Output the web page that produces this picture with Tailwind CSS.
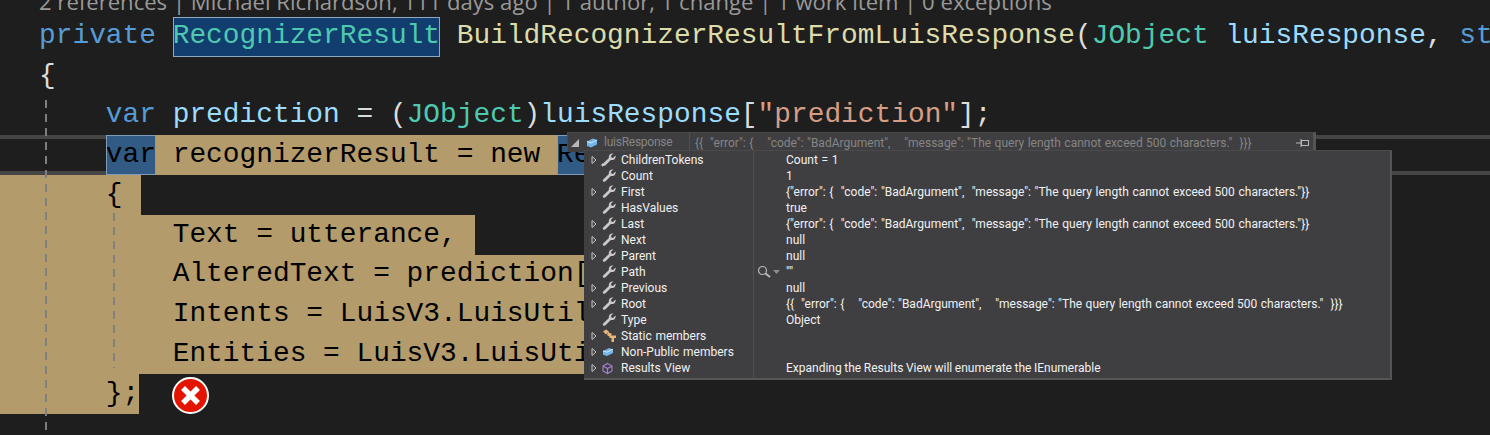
<!DOCTYPE html>
<html lang="en">
  <head>
    <meta charset="UTF-8" />
    <title>Debugger data tip</title>
    <script src="https://cdn.jsdelivr.net/npm/@tailwindcss/browser@4"></script>
  </head>
  <body class="bg-[#1e1e1e]">
    <svg class="hidden">
      <symbol id="wrench" viewBox="0 0 16 14">
        <path d="M15.6 2.6 L13 5 L11.4 4.4 L11 2.8 L13.4 0.5 C10.4 -0.1 8.2 2.2 8.9 5 L3.4 10.2 C2.2 11.4 3 13.6 5.2 12.6 L10.9 7 C13.6 7.6 16.2 5.4 15.6 2.6Z" fill="#c8c8c8" />
      </symbol>
      <symbol id="arrow" viewBox="0 0 6 8">
        <path d="M1 0.5 L5 4 L1 7.5Z" fill="#3f3f41" stroke="#c8c8c8" />
      </symbol>
    </svg>
    <div class="relative w-[1490px] h-[435px] overflow-hidden bg-[#1e1e1e]">
      <!-- code lens -->
      <div class="h-[16px] pl-[39px] flex items-end overflow-hidden">
        <div class="shrink-0 whitespace-nowrap font-['Open_Sans',sans-serif] text-[22.1px] leading-[30px] text-[#999999]">2 references | Michael Richardson, 111 days ago | 1 author, 1 change | 1 work item | 0 exceptions</div>
      </div>

      <!-- code -->
      <div class="font-['Liberation_Mono',monospace] text-[27.85px] text-[#dcdcdc] [&>div]:whitespace-pre">
        <div class="h-[39.8px] leading-[39.8px] pl-[39px]"><span class="text-[#569cd6]">private </span><span class="inline-block h-[39.8px] leading-[38px] text-[#4ec9b0] bg-[#113d6f] outline outline-1 -outline-offset-1 outline-[#8fa7c0]">RecognizerResult</span> <span class="text-[#dcdcaa]">BuildRecognizerResultFromLuisResponse</span>(<span class="text-[#4ec9b0]">JObject</span> <span class="text-[#9cdcfe]">luisResponse</span>, <span class="text-[#569cd6]">string</span> utterance)</div>
        <div class="h-[39.8px] leading-[39.8px] pl-[39px]">{</div>
        <div class="h-[39.8px] leading-[38px] pl-[39px]">    <span class="text-[#569cd6]">var</span> <span class="text-[#9cdcfe]">prediction</span> = (<span class="text-[#4ec9b0]">JObject</span>)<span class="text-[#9cdcfe]">luisResponse</span>[<span class="text-[#d69d85]">"prediction"</span>];</div>
        <div class="h-[39.8px] pl-[39px] border-y-[4px] border-[#464646] box-border flex text-black"><span class="text-transparent">    </span><span class="-my-[4px] h-[39.8px] leading-[39.8px] bg-[#315b85] outline outline-1 -outline-offset-1 outline-[#7f9cb8]">var</span><span class="-my-[4px] h-[39.8px] leading-[39.8px] bg-[#b39b6b]"> recognizerResult = new </span><span class="-my-[4px] h-[39.8px] leading-[39.8px] bg-[#315b85] outline outline-1 -outline-offset-1 outline-[#7f9cb8]">RecognizerResult</span></div>
        <div class="h-[39.8px] leading-[39.8px] text-black"><span class="inline-block h-full w-[141px] pl-[39px] bg-[#b39b6b]">    {</span></div>
        <div class="h-[39.8px] leading-[39.8px] text-black"><span class="inline-block h-full w-[475px] pl-[39px] bg-[#b39b6b]">        Text = utterance,</span></div>
        <div class="h-[39.8px] leading-[38px] text-black"><span class="inline-block h-full w-[900px] pl-[39px] bg-[#b39b6b]">        AlteredText = prediction["alteredQuery"],</span></div>
        <div class="h-[39.8px] leading-[38px] text-black"><span class="inline-block h-full w-[900px] pl-[39px] bg-[#b39b6b]">        Intents = LuisV3.LuisUtil.GetIntents(),</span></div>
        <div class="h-[39.8px] leading-[39.8px] text-black"><span class="inline-block h-full w-[900px] pl-[39px] bg-[#b39b6b]">        Entities = LuisV3.LuisUtil.GetEntities(),</span></div>
        <div class="h-[39.8px] leading-[39.8px] text-black flex items-center">
          <span class="h-full w-[139px] pl-[39px] bg-[#b39b6b]">    };</span>
          <svg class="ml-[33px] mt-[3px]" width="37" height="37" viewBox="0 0 37 37">
            <circle cx="18.5" cy="18.5" r="17.5" fill="#e51400" stroke="#ffffff" stroke-width="2" />
            <path d="M11 11 L26 26 M26 11 L11 26" stroke="#ffffff" stroke-width="5.5" />
          </svg>
        </div>
      </div>

      <!-- indent guides -->
      <div class="absolute left-[45px] top-[100px] w-[2px] h-[335px] bg-[repeating-linear-gradient(to_bottom,#808080_0,#808080_8px,transparent_8px,transparent_14px)]"></div>
      <div class="absolute left-[113px] top-[213px] w-[2px] h-[155px] bg-[repeating-linear-gradient(to_bottom,#808080_0,#808080_8px,transparent_8px,transparent_14px)]"></div>

      <!-- data tip header -->
      <div class="absolute left-[567px] top-[132px] w-[749px] h-[20px] bg-[#3f3f41] border border-[#4a4a4c] border-b-0 border-r-[3px] border-r-[#555557] flex items-center font-['Roboto',sans-serif] text-[12px] [word-spacing:0.5px] text-[#858585] [&>span]:whitespace-pre">
        <svg class="ml-[2px]" width="10" height="10" viewBox="0 0 10 10"><path d="M9 1V9H1Z" fill="#b8b8b8" /></svg>
        <svg class="ml-[6px]" width="12" height="12" viewBox="0 0 12 12"><path d="M1 4.5 L7 1.5 L11 3 V7.5 L5 10.5 L1 9Z" fill="#72b4ec" /><path d="M1 4.5 L5 6 L11 3" stroke="#d5e9fa" fill="none" /></svg>
        <span class="ml-[6px] w-[86px] h-full leading-[19px] tracking-[-0.25px] border-r border-[#505052]">luisResponse</span>
        <span class="ml-[5px] grow">{{  "error": {    "code": "BadArgument",    "message": "The query length cannot exceed 500 characters."  }}}</span>
        <svg class="mr-[3px]" width="14" height="8" viewBox="0 0 14 8"><path d="M0 4H5" stroke="#b8b8b8" /><rect x="5.5" y="1.5" width="7" height="5" fill="none" stroke="#b8b8b8" /><path d="M5 0V8" stroke="#b8b8b8" /></svg>
      </div>

      <!-- data tip rows -->
      <div class="absolute left-[584px] top-[150px] w-[808px] h-[230px] bg-[#3f3f41] border-t border-[#4a4a4c] border-r-2 border-b-2 border-r-[#555557] border-b-[#555557] py-[1px] font-['Roboto',sans-serif] text-[12px] leading-[16px] [word-spacing:0.7px] text-[#f1f1f1] [&_span]:whitespace-pre">
        <div class="absolute left-[169px] top-0 bottom-0 w-px bg-[#505052]"></div>
        <div class="flex h-[16px]"><span class="w-[37px] flex items-center gap-[3px] pl-[7px]"><svg width="6" height="8"><use href="#arrow" /></svg><svg width="16" height="14" viewBox="0 0 16 14"><use href="#wrench" width="16" height="14" /><path d="M2.5 10 L3 11.5 L4.5 12 L3 12.5 L2.5 14 L2 12.5 L0.5 12 L2 11.5Z" fill="#e8e8e8" /></svg></span><span class="w-[165px]">ChildrenTokens</span><span>Count = 1</span></div>
        <div class="flex h-[16px]"><span class="w-[37px] flex items-center gap-[3px] pl-[7px]"><svg class="invisible" width="6" height="8"></svg><svg width="16" height="14"><use href="#wrench" /></svg></span><span class="w-[165px]">Count</span><span>1</span></div>
        <div class="flex h-[16px]"><span class="w-[37px] flex items-center gap-[3px] pl-[7px]"><svg width="6" height="8"><use href="#arrow" /></svg><svg width="16" height="14"><use href="#wrench" /></svg></span><span class="w-[165px]">First</span><span>{"error": {  "code": "BadArgument",  "message": "The query length cannot exceed 500 characters."}}</span></div>
        <div class="flex h-[16px]"><span class="w-[37px] flex items-center gap-[3px] pl-[7px]"><svg class="invisible" width="6" height="8"></svg><svg width="16" height="14"><use href="#wrench" /></svg></span><span class="w-[165px]">HasValues</span><span>true</span></div>
        <div class="flex h-[16px]"><span class="w-[37px] flex items-center gap-[3px] pl-[7px]"><svg width="6" height="8"><use href="#arrow" /></svg><svg width="16" height="14"><use href="#wrench" /></svg></span><span class="w-[165px]">Last</span><span>{"error": {  "code": "BadArgument",  "message": "The query length cannot exceed 500 characters."}}</span></div>
        <div class="flex h-[16px]"><span class="w-[37px] flex items-center gap-[3px] pl-[7px]"><svg width="6" height="8"><use href="#arrow" /></svg><svg width="16" height="14"><use href="#wrench" /></svg></span><span class="w-[165px]">Next</span><span>null</span></div>
        <div class="flex h-[16px]"><span class="w-[37px] flex items-center gap-[3px] pl-[7px]"><svg width="6" height="8"><use href="#arrow" /></svg><svg width="16" height="14"><use href="#wrench" /></svg></span><span class="w-[165px]">Parent</span><span>null</span></div>
        <div class="flex h-[16px]"><span class="w-[37px] flex items-center gap-[3px] pl-[7px]"><svg class="invisible" width="6" height="8"></svg><svg width="16" height="14"><use href="#wrench" /></svg></span><span class="w-[136px]">Path</span><span class="w-[29px] flex items-center gap-[2px]"><svg width="14" height="14" viewBox="0 0 14 14"><circle cx="5.5" cy="5.5" r="4" fill="none" stroke="#b8b8b8" stroke-width="1.2" /><path d="M8.5 8.5 L13 12" stroke="#b8b8b8" stroke-width="2" /></svg><svg width="7" height="4" viewBox="0 0 7 4"><path d="M0 0H7L3.5 4Z" fill="#8c8c8c" /></svg></span><span>""</span></div>
        <div class="flex h-[16px]"><span class="w-[37px] flex items-center gap-[3px] pl-[7px]"><svg width="6" height="8"><use href="#arrow" /></svg><svg width="16" height="14"><use href="#wrench" /></svg></span><span class="w-[165px]">Previous</span><span>null</span></div>
        <div class="flex h-[16px]"><span class="w-[37px] flex items-center gap-[3px] pl-[7px]"><svg width="6" height="8"><use href="#arrow" /></svg><svg width="16" height="14"><use href="#wrench" /></svg></span><span class="w-[165px]">Root</span><span class="[word-spacing:0.5px]">{{  "error": {    "code": "BadArgument",    "message": "The query length cannot exceed 500 characters."  }}}</span></div>
        <div class="flex h-[16px]"><span class="w-[37px] flex items-center gap-[3px] pl-[7px]"><svg class="invisible" width="6" height="8"></svg><svg width="16" height="14"><use href="#wrench" /></svg></span><span class="w-[165px]">Type</span><span>Object</span></div>
        <div class="flex h-[16px]"><span class="w-[37px] flex items-center gap-[3px] pl-[7px]"><svg width="6" height="8"><use href="#arrow" /></svg><svg width="16" height="14" viewBox="0 0 16 14"><path d="M3 2.5 L6 0.5 L9 2.5 L6 5.5Z" fill="#e8b777" /><path d="M8 3 L12 5 L10 8 L7 6Z" fill="#e8b777" /><path d="M9.5 6.5 H16 V9 H14 V13 H11.5 V9 H9.5Z" fill="#e8b777" /></svg></span><span class="w-[165px]">Static members</span></div>
        <div class="flex h-[16px]"><span class="w-[37px] flex items-center gap-[3px] pl-[7px]"><svg width="6" height="8"><use href="#arrow" /></svg><svg width="16" height="14" viewBox="0 0 16 14"><path d="M3 6 L9 3 L13 4.2 V8 L7 11 L3 9.8Z" fill="#72b4ec" /><path d="M3 6 L7 7.2 L13 4.2" stroke="#d5e9fa" fill="none" /></svg></span><span class="w-[165px]">Non-Public members</span></div>
        <div class="flex h-[16px]"><span class="w-[37px] flex items-center gap-[3px] pl-[7px]"><svg width="6" height="8"><use href="#arrow" /></svg><svg width="16" height="14" viewBox="0 0 16 14"><path d="M7.5 2.5 L12 5 V10 L7.5 12.5 L3 10 V5Z M3 5 L7.5 7.5 L12 5 M7.5 7.5 V12.5" fill="none" stroke="#a87fd4" stroke-width="1.1" /></svg></span><span class="w-[165px]">Results View</span><span class="[word-spacing:-0.4px]">Expanding the Results View will enumerate the IEnumerable</span></div>
      </div>
    </div>
  </body>
</html>
